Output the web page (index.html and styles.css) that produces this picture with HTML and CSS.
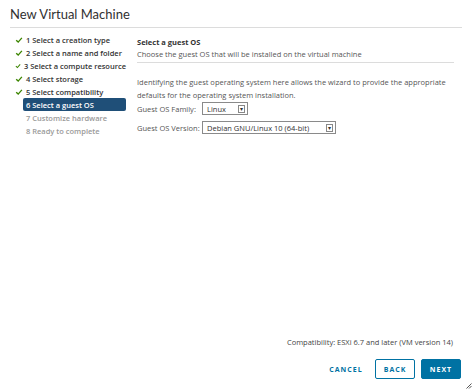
FILE: index.html
```html
<!DOCTYPE html>
<html>
  <head>
    <meta charset="utf-8" />
    <title>New Virtual Machine</title>
    <link rel="stylesheet" href="styles.css">
  </head>
  <body>
    <div class="wizard">
      <h1 class="wizard-title">New Virtual Machine</h1>
      <div class="wizard-body">
        <ul class="steps">
          <li class="step step-done">
            <svg class="check" viewBox="0 0 10 10"><path d="M1.5 5.2 L4 7.6 L8.6 2.4" /></svg>
            1 Select a creation type
          </li>
          <li class="step step-done">
            <svg class="check" viewBox="0 0 10 10"><path d="M1.5 5.2 L4 7.6 L8.6 2.4" /></svg>
            2 Select a name and folder
          </li>
          <li class="step step-done">
            <svg class="check" viewBox="0 0 10 10"><path d="M1.5 5.2 L4 7.6 L8.6 2.4" /></svg>
            3 Select a compute resource
          </li>
          <li class="step step-done">
            <svg class="check" viewBox="0 0 10 10"><path d="M1.5 5.2 L4 7.6 L8.6 2.4" /></svg>
            4 Select storage
          </li>
          <li class="step step-done">
            <svg class="check" viewBox="0 0 10 10"><path d="M1.5 5.2 L4 7.6 L8.6 2.4" /></svg>
            5 Select compatibility
          </li>
          <li class="step step-active">6 Select a guest OS</li>
          <li class="step step-todo">7 Customize hardware</li>
          <li class="step step-todo">8 Ready to complete</li>
        </ul>
        <div class="page">
          <div class="page-head">
            <h2 class="page-title">Select a guest OS</h2>
            <p class="page-sub">Choose the guest OS that will be installed on the virtual machine</p>
          </div>
          <p class="page-text">
            Identifying the guest operating system here allows the wizard to provide the appropriate
            defaults for the operating system installation.
          </p>
          <div class="field">
            <span class="field-label">Guest OS Family:</span>
            <div class="select select-family">
              <span>Linux</span>
              <span class="select-arrow">&#9662;</span>
            </div>
          </div>
          <div class="field field-gap">
            <span class="field-label">Guest OS Version:</span>
            <div class="select select-version">
              <span>Debian GNU/Linux 10 (64-bit)</span>
              <span class="select-arrow">&#9662;</span>
            </div>
          </div>
          <p class="compat">Compatibility: ESXi 6.7 and later (VM version 14)</p>
        </div>
      </div>
      <div class="footer">
        <button class="btn btn-link">CANCEL</button>
        <button class="btn btn-outline">BACK</button>
        <button class="btn btn-primary">NEXT</button>
      </div>
      <svg class="grip" viewBox="0 0 6 6"><path d="M5.5 0.5 L0.5 5.5 M5.5 3 L3 5.5" /></svg>
    </div>
  </body>
</html>
```

FILE: styles.css
```css
* {
  margin: 0;
  padding: 0;
  box-sizing: border-box;
}
body {
  width: 474px;
  height: 391px;
  background: white;
  font-family: "Open Sans", Arial, sans-serif;
  color: #565656;
  overflow: hidden;
}
.wizard {
  position: relative;
  height: 391px;
  display: flex;
  flex-direction: column;
  padding: 6px 12px 0 10px;
}
.wizard-title {
  font-family: Lato, Arial, sans-serif;
  font-weight: normal;
  font-size: 13px;
  color: #313131;
  line-height: 17px;
  padding-bottom: 4px;
  border-bottom: 1px solid #dcdcdc;
  width: 452px;
}
.wizard-body {
  flex: 1;
  display: flex;
}
.steps {
  list-style: none;
  width: 116px;
  padding-top: 5px;
}
.step {
  display: flex;
  align-items: center;
  height: 13px;
  font-size: 7.5px;
  font-weight: 600;
  color: #333;
  padding-left: 16px;
  white-space: nowrap;
}
.step-done {
  padding-left: 5px;
}
.check {
  width: 8px;
  height: 8px;
  margin-right: 3px;
  fill: none;
  stroke: #3c8500;
  stroke-width: 1.7;
}
.step-active {
  background: #1f4f78;
  color: white;
  border-radius: 2px;
  margin-left: 13px;
  padding-left: 3px;
}
.step-todo {
  color: #9a9a9a;
}
.page {
  flex: 1;
  display: flex;
  flex-direction: column;
  padding-left: 11px;
  padding-top: 8px;
  font-size: 7.5px;
}
.page-head {
  border-bottom: 1px solid #dcdcdc;
  width: 317px;
  padding-bottom: 2px;
}
.page-title {
  font-size: 7.5px;
  font-weight: 700;
  color: #333;
  line-height: 12px;
}
.page-sub {
  line-height: 12px;
}
.page-text {
  line-height: 13px;
  margin-top: 13px;
  width: 320px;
}
.field {
  display: flex;
  align-items: center;
}
.field-gap {
  margin-top: 6px;
}
.field-label {
  width: 65px;
}
.select {
  display: flex;
  justify-content: space-between;
  align-items: center;
  height: 13px;
  border: 1px solid #8a8a8a;
  padding: 0 2px 0 4px;
  color: #333;
  background: white;
}
.select-family {
  width: 46px;
}
.select-version {
  width: 134px;
}
.select-arrow {
  font-size: 6px;
  border: 1px solid #888;
  width: 7px;
  height: 8px;
  line-height: 7px;
  text-align: center;
  color: #333;
}
.compat {
  margin-top: auto;
  margin-bottom: 12px;
  align-self: flex-end;
  margin-right: 9px;
  color: #454545;
}
.footer {
  display: flex;
  justify-content: flex-end;
  align-items: center;
  gap: 6px;
  padding-right: 1px;
  padding-bottom: 12px;
}
.btn {
  font-family: "Open Sans", Arial, sans-serif;
  font-size: 7px;
  font-weight: 700;
  letter-spacing: 1px;
  height: 20px;
  width: 40px;
  border-radius: 2px;
  background: white;
  color: #0072a3;
  border: 1px solid #0072a3;
}
.btn-link {
  border-color: transparent;
  width: 44px;
  margin-right: 1px;
}
.btn-primary {
  background: #0072a3;
  color: white;
}
.grip {
  position: absolute;
  right: 2px;
  bottom: 2px;
  width: 6px;
  height: 6px;
  stroke: #555;
  stroke-width: 1;
}
```
